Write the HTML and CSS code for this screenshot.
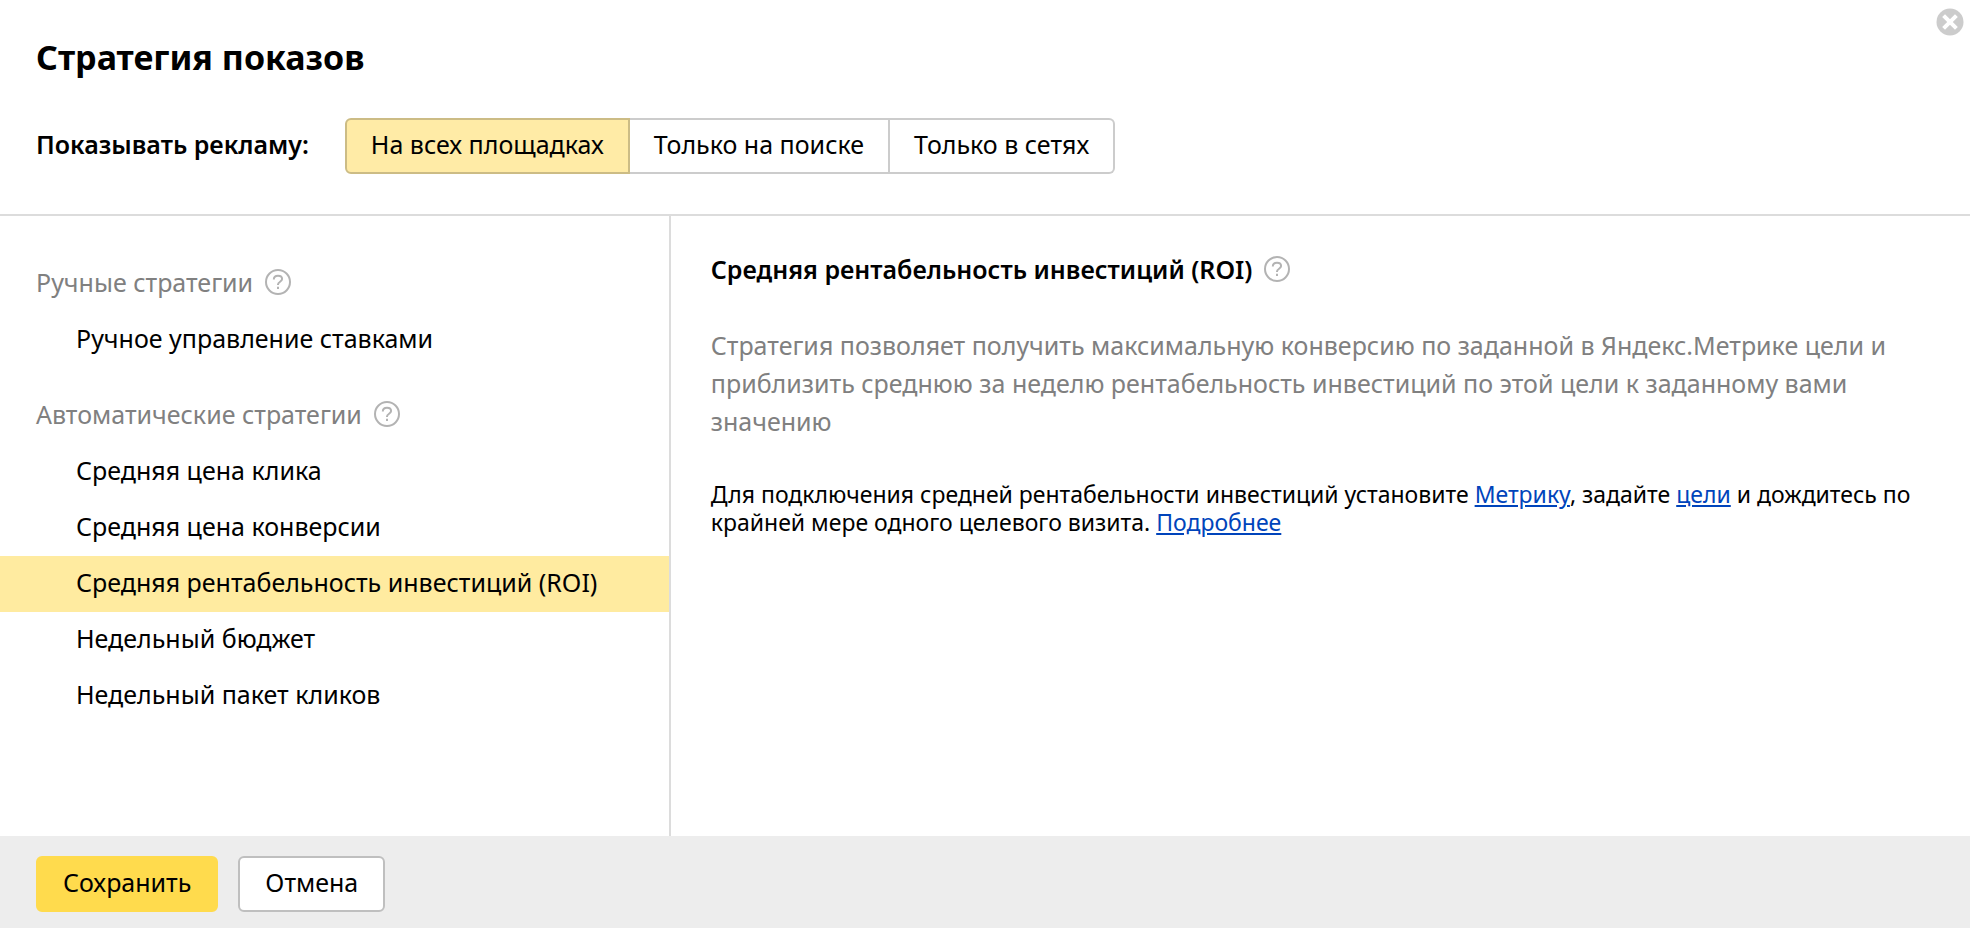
FILE: index.html
```html
<!DOCTYPE html>
<html lang="ru">
<head>
  <meta charset="utf-8">
  <title>Стратегия показов</title>
  <link rel="stylesheet" href="styles.css">
</head>
<body>

<form class="popup">

  <!-- Header -->
  <header class="popup-header">
    <h1>Стратегия показов</h1>
    <button type="button" class="close" aria-label="Закрыть">
      <svg width="28" height="28" viewBox="0 0 28 28">
        <circle cx="14" cy="14" r="13.5" fill="#ccc"/>
        <path d="M7.6 7.6l12.8 12.8M20.4 7.6L7.6 20.4" stroke="#fff" stroke-width="4"/>
      </svg>
    </button>
    <div class="platform">
      <span class="platform-title" id="platformTitle">Показывать рекламу:</span>
      <div class="switcher" role="radiogroup" aria-labelledby="platformTitle">
        <input type="radio" name="platform" id="platformAll" checked>
        <label for="platformAll">На всех площадках</label>
        <input type="radio" name="platform" id="platformSearch">
        <label for="platformSearch">Только на поиске</label>
        <input type="radio" name="platform" id="platformNet">
        <label for="platformNet">Только в сетях</label>
      </div>
    </div>
  </header>

  <div class="content">

    <!-- Strategy list -->
    <nav class="sidebar">
      <div class="group">
        <h2>Ручные стратегии
          <button type="button" class="help" aria-label="Справка">
            <svg width="26" height="26" viewBox="0 0 26 26">
              <circle cx="13" cy="13" r="12"/>
              <path d="M8.8 10.6C8.8 8.2 10.6 6.8 13 6.8s4.1 1.3 4.1 3.3c0 2.6-4.1 2.7-4.1 5.4v.6M13 17.8v2.2"/>
            </svg>
          </button>
        </h2>
        <button type="button" class="item">Ручное управление ставками</button>
      </div>
      <div class="group">
        <h2>Автоматические стратегии
          <button type="button" class="help" aria-label="Справка">
            <svg width="26" height="26" viewBox="0 0 26 26">
              <circle cx="13" cy="13" r="12"/>
              <path d="M8.8 10.6C8.8 8.2 10.6 6.8 13 6.8s4.1 1.3 4.1 3.3c0 2.6-4.1 2.7-4.1 5.4v.6M13 17.8v2.2"/>
            </svg>
          </button>
        </h2>
        <button type="button" class="item">Средняя цена клика</button>
        <button type="button" class="item">Средняя цена конверсии</button>
        <button type="button" class="item active">Средняя рентабельность инвестиций (ROI)</button>
        <button type="button" class="item">Недельный бюджет</button>
        <button type="button" class="item">Недельный пакет кликов</button>
      </div>
    </nav>

    <!-- Selected strategy -->
    <section class="details">
      <h2>Средняя рентабельность инвестиций (ROI)
        <button type="button" class="help" aria-label="Справка">
          <svg width="26" height="26" viewBox="0 0 26 26">
            <circle cx="13" cy="13" r="12"/>
            <path d="M8.8 10.6C8.8 8.2 10.6 6.8 13 6.8s4.1 1.3 4.1 3.3c0 2.6-4.1 2.7-4.1 5.4v.6M13 17.8v2.2"/>
          </svg>
        </button>
      </h2>
      <p class="description">Стратегия позволяет получить максимальную конверсию по заданной в Яндекс.Метрике цели и приблизить среднюю за неделю рентабельность инвестиций по этой цели к заданному вами значению</p>
      <p class="note">Для подключения средней рентабельности инвестиций установите <a href="#">Метрику</a>, задайте <a href="#">цели</a> и дождитесь по крайней мере одного целевого визита. <a href="#">Подробнее</a></p>
    </section>

  </div>

  <footer class="popup-footer">
    <button type="submit" class="btn btn-save">Сохранить</button>
    <button type="button" class="btn">Отмена</button>
  </footer>

</form>

</body>
</html>
```
FILE: styles.css
```css
* {
  box-sizing: border-box;
}

body {
  margin: 0;
  font-family: "Noto Sans", "Open Sans", sans-serif;
  font-size: 25px;
  color: #000;
  background: #fff;
}

button {
  font: inherit;
  color: inherit;
  border: none;
  background: none;
  padding: 0;
  cursor: pointer;
}

h1, h2, p {
  margin: 0;
}

.popup {
  display: flex;
  flex-direction: column;
  min-height: 100vh;
}

.popup-header {
  position: relative;
  padding: 32px 36px 40px;
  border-bottom: 2px solid #dcdcdc;
}

h1 {
  font-size: 34px;
  line-height: 50px;
}

.close {
  position: absolute;
  top: 8px;
  right: 6px;
}

.close svg, .help svg {
  display: block;
}

.platform {
  display: flex;
  align-items: center;
  gap: 36px;
  margin-top: 36px;
}

.platform-title {
  padding-bottom: 4px;
  font-weight: 600;
}

.switcher {
  display: flex;
}

.switcher input {
  position: absolute;
  opacity: 0;
}

.switcher label {
  height: 56px;
  line-height: 48px;
  padding: 0 24px;
  border: 2px solid #ccc;
  border-left: none;
  cursor: pointer;
}

.switcher label:first-of-type {
  border-left: 2px solid #ccc;
  border-radius: 6px 0 0 6px;
}

.switcher label:last-of-type {
  border-radius: 0 6px 6px 0;
}

.switcher input:checked + label {
  background: #ffeba6;
  border-color: #ccbc85;
}

.content {
  display: flex;
  flex: 1;
}

.sidebar {
  width: 34.05%;
  padding: 40px 0;
  border-right: 2px solid #dcdcdc;
}

.group {
  margin-bottom: 20px;
}

h2 {
  display: flex;
  align-items: center;
  gap: 12px;
  font-size: 25px;
  font-weight: 600;
}

.group h2 {
  height: 56px;
  padding: 0 0 4px 36px;
  font-weight: normal;
  color: #808080;
}

.item {
  display: block;
  width: 100%;
  height: 56px;
  padding: 0 0 4px 76px;
  text-align: left;
}

.active {
  background: #ffeba0;
}

.help svg {
  fill: none;
  stroke: #b3b3b3;
  stroke-width: 2;
}

.details {
  flex: 1;
  padding: 34px 40px;
}

.details h2 {
  line-height: 38px;
}

.description {
  margin-top: 38px;
  line-height: 38px;
  color: #808080;
}

.note {
  margin-top: 40px;
  font-size: 23px;
  line-height: 28px;
}

.note a {
  color: #04b;
}

.popup-footer {
  display: flex;
  gap: 20px;
  padding: 20px 36px 16px;
  background: #ededed;
}

.btn {
  height: 56px;
  padding: 0 25px 4px;
  border: 2px solid #bfbfbf;
  border-radius: 6px;
  background: #fff;
}

.btn-save {
  border-color: #ffdb4d;
  background: #ffdb4d;
}
```
